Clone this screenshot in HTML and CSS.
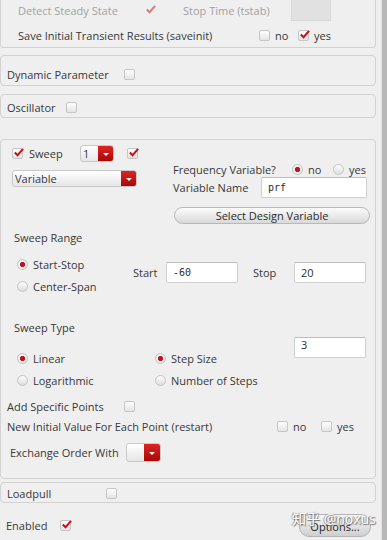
FILE: index.html
```html
<!DOCTYPE html>
<html lang="en">
  <head>
    <title>Sweep settings</title>
    <meta charset="utf-8" />
    <link rel="stylesheet" href="styles.css">
  </head>
  <body>
    <div class="main">
      <!-- painel superior (cortado) -->
      <div class="panel panel-top">
        <div class="row row-steady">
          <span class="lbl dim w-126">Detect Steady State</span>
          <span class="cb checked dim-cb"><svg viewBox="0 0 12 12"><path d="M2 6 L5 9 L11 2" /></svg></span>
          <span class="lbl dim stop-lbl">Stop Time (tstab)</span>
          <span class="input-dim"></span>
        </div>
        <div class="row row-save">
          <span class="lbl w-241">Save Initial Transient Results (saveinit)</span>
          <span class="cb"></span>
          <span class="opt-lbl w-23">no</span>
          <span class="cb checked"><svg viewBox="0 0 12 12"><path d="M2 6 L5 9 L11 2" /></svg></span>
          <span class="opt-lbl">yes</span>
        </div>
      </div>

      <div class="panel panel-dyn">
        <div class="row row-16">
          <span class="lbl w-117">Dynamic Parameter</span>
          <span class="cb"></span>
        </div>
      </div>

      <div class="panel panel-osc">
        <div class="row row-16">
          <span class="lbl w-59">Oscillator</span>
          <span class="cb"></span>
        </div>
      </div>

      <!-- painel de varredura -->
      <div class="panel panel-sweep">
        <div class="sweep-head">
          <div class="head-left">
            <div class="row row-17 head-row1">
              <span class="cb checked"><svg viewBox="0 0 12 12"><path d="M2 6 L5 9 L11 2" /></svg></span>
              <span class="lbl sweep-lbl">Sweep</span>
              <span class="dropdown dd-small"><span class="dd-text">1</span><span class="dd-btn"></span></span>
              <span class="cb checked cb-after"><svg viewBox="0 0 12 12"><path d="M2 6 L5 9 L11 2" /></svg></span>
            </div>
            <div class="dropdown dd-wide"><span class="dd-text">Variable</span><span class="dd-btn"></span></div>
          </div>
          <div class="head-right">
            <div class="row row-14 freq-row">
              <span class="lbl w-119">Frequency Variable?</span>
              <span class="radio on"></span>
              <span class="opt-lbl w-25">no</span>
              <span class="radio"></span>
              <span class="opt-lbl">yes</span>
            </div>
            <div class="row name-row">
              <span class="lbl w-88">Variable Name</span>
              <span class="input mono w-106">prf</span>
            </div>
            <div class="pill-btn">Select Design Variable</div>
          </div>
        </div>

        <div class="section-title range-title">Sweep Range</div>
        <div class="range-block">
          <div class="radio-col w-116">
            <div class="row row-22"><span class="radio on"></span><span class="opt-lbl">Start-Stop</span></div>
            <div class="row row-22"><span class="radio"></span><span class="opt-lbl">Center-Span</span></div>
          </div>
          <div class="row start-stop">
            <span class="lbl w-33">Start</span>
            <span class="input mono w-72">-60</span>
            <span class="lbl stop-lbl2">Stop</span>
            <span class="input w-72">20</span>
          </div>
        </div>

        <div class="section-title type-title">Sweep Type</div>
        <div class="type-block">
          <div class="radio-col w-138">
            <div class="row row-22"><span class="radio on"></span><span class="opt-lbl">Linear</span></div>
            <div class="row row-22"><span class="radio"></span><span class="opt-lbl">Logarithmic</span></div>
          </div>
          <div class="radio-col mid-col">
            <div class="row row-22"><span class="radio on"></span><span class="opt-lbl">Step Size</span></div>
            <div class="row row-22"><span class="radio"></span><span class="opt-lbl">Number of Steps</span></div>
          </div>
          <span class="input w-72 step-input">3</span>
        </div>

        <div class="row row-18 add-row">
          <span class="lbl w-117">Add Specific Points</span>
          <span class="cb"></span>
        </div>
        <div class="row row-18 restart-row">
          <span class="lbl w-270">New Initial Value For Each Point (restart)</span>
          <span class="cb"></span>
          <span class="opt-lbl w-23">no</span>
          <span class="cb"></span>
          <span class="opt-lbl">yes</span>
        </div>
        <div class="row exchange-row">
          <span class="lbl w-116">Exchange Order With</span>
          <span class="dropdown dd-ex"><span class="dd-text"></span><span class="dd-btn"></span></span>
        </div>
      </div>

      <div class="panel panel-load">
        <div class="row row-16">
          <span class="lbl w-99">Loadpull</span>
          <span class="cb"></span>
        </div>
      </div>

      <div class="footer">
        <span class="lbl w-54">Enabled</span>
        <span class="cb checked"><svg viewBox="0 0 12 12"><path d="M2 6 L5 9 L11 2" /></svg></span>
        <span class="options-btn">Options...</span>
        <span class="watermark">知乎 @noxus</span>
      </div>
    </div>
    <div class="scrollbar"></div>
  </body>
</html>
```

FILE: styles.css
```css
body {
  margin: 0;
  height: 540px;
  overflow: hidden;
  display: flex;
  background-color: #efefef;
  font-family: 'Open Sans', 'Noto Sans CJK SC', sans-serif;
  font-size: 11px;
  color: #383838;
}

.main {
  width: 381px;
  position: relative;
}

.scrollbar {
  width: 5px;
  border-left: 1px solid #e2e2e2;
  background-color: #b8b8b8;
}

/* paineis */
.panel {
  width: 374px;
  border: 1px solid #d2d2d2;
  border-radius: 4px;
}

.panel-top {
  border-top: none;
  border-radius: 0 0 4px 4px;
  padding-bottom: 4px;
}

.panel-dyn {
  margin-top: 7px;
  padding: 10px 0 3px 6px;
  width: 368px;
}

.panel-osc {
  margin-top: 8px;
  padding: 4px 0 2px 6px;
  width: 368px;
}

.panel-sweep {
  margin-top: 21px;
  padding-bottom: 16px;
}

.panel-load {
  margin-top: 3px;
  padding: 2px 0 1px 6px;
  width: 368px;
}

/* linhas */
.row {
  display: flex;
  align-items: center;
}

.row-14 { height: 14px; }
.row-16 { height: 16px; }
.row-17 { height: 17px; }
.row-18 { height: 18px; }
.row-22 { height: 22px; }

.lbl {
  white-space: nowrap;
  flex-shrink: 0;
}

.dim {
  color: #a2a2a2;
}

.opt-lbl {
  margin-left: 5px;
  white-space: nowrap;
}

.w-23 { width: 23px; }
.w-25 { width: 25px; }
.w-33 { width: 33px; }
.w-54 { width: 54px; }
.w-59 { width: 59px; }
.w-72 { width: 72px; }
.w-88 { width: 88px; }
.w-99 { width: 99px; }
.w-106 { width: 106px; }
.w-116 { width: 116px; }
.w-117 { width: 117px; }
.w-119 { width: 119px; }
.w-126 { width: 126px; }
.w-138 { width: 138px; }
.w-241 { width: 241px; }
.w-270 { width: 270px; }

.row-steady {
  height: 20px;
  padding-left: 17px;
}

.stop-lbl {
  margin-left: 28px;
  width: 108px;
}

.input-dim {
  width: 38px;
  height: 20px;
  align-self: flex-start;
  background-color: #e1e1e1;
  border: 1px solid #dadada;
  border-top: none;
}

.row-save {
  height: 16px;
  margin-top: 7px;
  padding-left: 17px;
}

/* checkbox e radio */
.cb {
  position: relative;
  width: 9px;
  height: 9px;
  flex-shrink: 0;
  border: 1px solid #c6c6c6;
  border-radius: 2px;
  background: linear-gradient(#ffffff, #e4e4e4);
}

.cb svg {
  position: absolute;
  left: 0;
  top: -2px;
  width: 11px;
  height: 11px;
  fill: none;
  stroke: #c8101c;
  stroke-width: 2.2;
}

.dim-cb {
  border-color: transparent;
  background: none;
}

.dim-cb svg {
  stroke: #d77a80;
}

.radio {
  width: 9px;
  height: 9px;
  flex-shrink: 0;
  border: 1px solid #c4c4c4;
  border-radius: 50%;
  background: linear-gradient(#fdfdfd, #dedede);
}

.radio.on {
  background: radial-gradient(circle, #c8101c 0, #c8101c 2.2px, #f4f4f4 3px, #e2e2e2 100%);
}

/* dropdowns */
.dropdown {
  display: flex;
  flex-shrink: 0;
  border: 1px solid #c8c8c8;
  border-radius: 3px;
  overflow: hidden;
  background: linear-gradient(#ffffff, #e6e6e6);
  box-sizing: border-box;
}

.dd-text {
  flex: 1;
  padding-left: 2px;
  line-height: 15px;
}

.dd-btn {
  width: 15px;
  position: relative;
  background: linear-gradient(#df2424, #a80808);
}

.dd-btn::after {
  content: '';
  position: absolute;
  left: 5px;
  top: 50%;
  margin-top: -1px;
  border-left: 3px solid transparent;
  border-right: 3px solid transparent;
  border-top: 3px solid #ffffff;
}

.dd-small {
  width: 34px;
  height: 17px;
}

.dd-wide {
  width: 125px;
  height: 17px;
  margin-top: 8px;
}

.dd-ex {
  width: 35px;
  height: 19px;
}

.dd-ex .dd-btn {
  width: 16px;
}

/* cabeçalho da varredura */
.sweep-head {
  display: flex;
}

.head-left {
  width: 125px;
  margin-left: 11px;
}

.head-row1 {
  margin-top: 5px;
}

.sweep-lbl {
  margin-left: 6px;
  width: 51px;
}

.cb-after {
  margin-left: 13px;
}

.head-right {
  margin-left: 36px;
}

.freq-row {
  margin-top: 22px;
}

.name-row {
  margin-top: 1px;
}

.input {
  height: 21px;
  box-sizing: border-box;
  flex-shrink: 0;
  padding-left: 6px;
  line-height: 19px;
  background-color: #ffffff;
  border: 1px solid #d0d0d0;
  border-top-color: #bdbdbd;
  border-radius: 2px;
  color: #2e2e2e;
}

.mono {
  font-family: 'DejaVu Sans Mono', monospace;
  font-size: 10px;
}

.pill-btn {
  width: 196px;
  height: 17px;
  box-sizing: border-box;
  margin: 9px 0 0 1px;
  border: 1px solid #b8b8b8;
  border-radius: 9px;
  background: linear-gradient(#fcfcfc, #d9d9d9);
  text-align: center;
  line-height: 15px;
  color: #2a2a2a;
}

/* faixa e tipo */
.section-title {
  height: 14px;
  line-height: 14px;
  padding-left: 13px;
}

.range-title {
  margin-top: 7px;
}

.range-block {
  display: flex;
  margin-top: 8px;
}

.radio-col {
  padding-left: 16px;
  box-sizing: content-box;
}

.start-stop {
  margin-top: 9px;
  height: 21px;
}

.stop-lbl2 {
  margin-left: 15px;
  width: 41px;
}

.type-title {
  margin-top: 24px;
}

.type-block {
  display: flex;
  align-items: flex-start;
  height: 56px;
}

.type-block .radio-col {
  padding-top: 12px;
}

.mid-col.radio-col {
  padding-left: 0;
  width: 139px;
}

.step-input {
  margin-top: 2px;
  line-height: 14px;
}

.add-row {
  margin-top: 6px;
  padding-left: 6px;
}

.restart-row {
  margin-top: 2px;
  padding-left: 6px;
}

.restart-row .w-23 {
  margin-right: 5px;
}

.exchange-row {
  margin-top: 8px;
  height: 19px;
  padding-left: 9px;
}

/* rodapé */
.footer {
  display: flex;
  align-items: center;
  position: relative;
  width: 365px;
  height: 24px;
  margin-top: 10px;
  padding-left: 6px;
}

.options-btn {
  margin-left: auto;
  width: 72px;
  height: 23px;
  box-sizing: border-box;
  border: 1px solid #b4b4b4;
  border-radius: 10px;
  background: linear-gradient(#f8f8f8, #cfcfcf);
  text-align: center;
  line-height: 24px;
  color: #222222;
}

.watermark {
  position: absolute;
  left: 292px;
  top: -5px;
  font-size: 14px;
  color: #ffffff;
  text-shadow: 1px 1px 1px #707070, -1px 0 1px #909090;
  white-space: nowrap;
}
```
